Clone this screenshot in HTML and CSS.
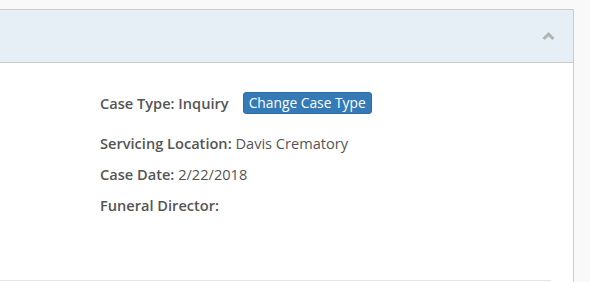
FILE: index.html
```html
<!DOCTYPE html>
<html>
<head>
<meta charset="utf-8">
<link rel="stylesheet" href="styles.css">
</head>
<body>
<div class="panel">
  <div class="panel-heading">
    <svg class="chevron" width="13" height="10" viewBox="0 0 13 10"><polyline points="1.6,8 6.5,3.1 11.4,8" fill="none" stroke="#b3b3b3" stroke-width="3"/></svg>
  </div>
  <div class="panel-body">
    <div class="details">
      <div class="row first"><span class="label">Case Type: Inquiry</span><button class="btn">Change Case Type</button></div>
      <div class="row"><span class="label">Servicing Location:</span> Davis Crematory</div>
      <div class="row"><span class="label">Case Date:</span> 2/22/2018</div>
      <div class="row"><span class="label">Funeral Director:</span></div>
    </div>
    <div class="rule"></div>
  </div>
</div>
</body>
</html>
```
FILE: styles.css
```css
html, body {
  margin: 0;
  padding: 0;
  background: #f9f9f9;
  font-family: "Open Sans", "Liberation Sans", sans-serif;
  font-size: 14.6px;
  color: #555;
  overflow: hidden;
}
.panel {
  margin-top: 9px;
  width: 573px;
  border: 1px solid #ccc;
  border-left: none;
  border-bottom: none;
  background: #fff;
  height: 280px;
}
.panel-heading {
  height: 52px;
  background: #e7eff6;
  border-bottom: 1px solid #ccc;
  display: flex;
  justify-content: flex-end;
  align-items: center;
  padding-right: 18px;
}
.chevron {
  display: block;
  margin-top: 0;
}
.panel-body {
  padding-top: 29px;
}
.details {
  padding-left: 100px;
  display: flex;
  flex-direction: column;
}
.row {
  height: 19px;
  line-height: 19px;
  margin-bottom: 12px;
  display: flex;
  align-items: center;
  white-space: pre;
}
.row.first {
  height: 22px;
  margin-bottom: 20px;
}
.label {
  font-weight: 600;
}
.btn {
  margin-left: 14px;
  height: 22px;
  padding: 0 5px;
  background: #337ab7;
  border: 1px solid #2e6da4;
  border-radius: 3px;
  color: #fff;
  font-family: "Open Sans", "Liberation Sans", sans-serif;
  font-size: 13.8px;
  line-height: 20px;
}
.rule {
  margin-top: 53px;
  width: 551px;
  height: 0;
  border-top: 1px solid #e5e5e5;
}
```
